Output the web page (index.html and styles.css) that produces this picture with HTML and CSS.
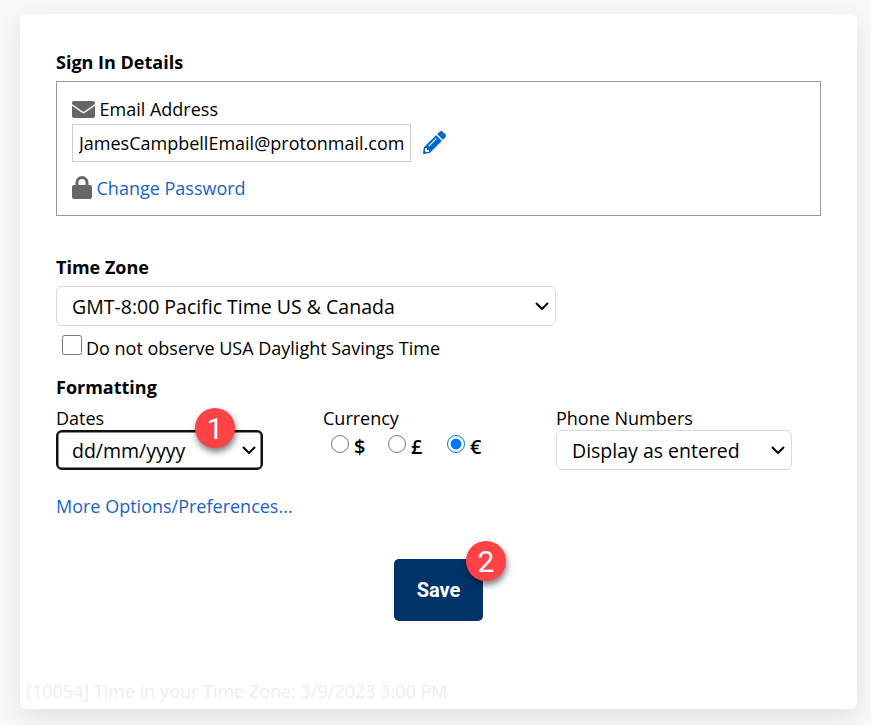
FILE: index.html
```
<!DOCTYPE html>
<html lang="en">
<head>
    <meta charset="UTF-8">
    <meta name="viewport" content="width=device-width, initial-scale=1.0">
    <title>Settings</title>
    <link rel="stylesheet" href="styles.css">
</head>
<body>
    <form class="card">
        <h2>Sign In Details</h2>
        <div class="signin">
            <label class="icon-row" for="email">
                <svg class="icon-mail" viewBox="0 0 23 17"><path fill="#666" d="M2 0h19a2 2 0 0 1 2 2v1l-10.300 7.200a2 2 0 0 1-2.400 0L0 3V2a2 2 0 0 1 2-2zM0 4.700l9.700 6.800a3 3 0 0 0 3.600 0L23 4.700V15a2 2 0 0 1-2 2H2a2 2 0 0 1-2-2z"/></svg>
                <span>Email Address</span>
            </label>
            <div class="email-row">
                <input type="text" id="email" class="email" value="JamesCampbellEmail@protonmail.com">
                <svg class="icon-pencil" viewBox="0 0 512 512"><path fill="#0066cc" d="M497.900 142.100l-46.100 46.100c-4.700 4.700-12.300 4.700-17 0l-111-111c-4.700-4.700-4.700-12.300 0-17l46.100-46.100c18.700-18.700 49.100-18.700 67.900 0l60.100 60.100c18.800 18.700 18.800 49.100 0 68zM284.200 99.800L21.600 362.400.4 483.900c-2.900 16.400 11.400 30.600 27.800 27.800l121.500-21.300 262.600-262.600c4.700-4.700 4.700-12.300 0-17l-111-111c-4.800-4.700-12.400-4.700-17.100 0zM124.100 339.900c-5.500-5.500-5.500-14.300 0-19.800l154-154c5.500-5.500 14.300-5.500 19.800 0s5.500 14.300 0 19.800l-154 154c-5.500 5.500-14.300 5.500-19.800 0zM88 424h48v36.300l-64.500 11.300-31.100-31.100L51.700 376H88v48z"/></svg>
            </div>
            <div class="icon-row password-row">
                <svg class="icon-lock" viewBox="0 0 20 23"><path fill="#666" d="M18 9h-1.500V6.500a6.500 6.500 0 0 0-13 0V9H2a2 2 0 0 0-2 2v10a2 2 0 0 0 2 2h16a2 2 0 0 0 2-2V11a2 2 0 0 0-2-2zM13.500 9h-7V6.500a3.500 3.500 0 0 1 7 0z"/></svg>
                <a href="#">Change Password</a>
            </div>
        </div>

        <h2>Time Zone</h2>
        <div class="select zone">
            <select>
                <option>GMT-8:00 Pacific Time US &amp; Canada</option>
            </select>
            <svg class="chevron" viewBox="0 0 14 8"><path d="M1 1l6 6 6-6"/></svg>
        </div>
        <label class="check-row">
            <input type="checkbox" class="checkbox">
            <span>Do not observe USA Daylight Savings Time</span>
        </label>

        <h2 class="formatting">Formatting</h2>
        <div class="columns">
            <div>
                <div class="label">Dates</div>
                <div class="select dates">
                    <select>
                        <option>dd/mm/yyyy</option>
                    </select>
                    <svg class="chevron" viewBox="0 0 14 8"><path d="M1 1l6 6 6-6"/></svg>
                    <span class="step step-one">1</span>
                </div>
            </div>
            <div>
                <div class="label">Currency</div>
                <div class="radios">
                    <label><input type="radio" name="currency"><b>$</b></label>
                    <label><input type="radio" name="currency"><b>£</b></label>
                    <label><input type="radio" name="currency" checked><b>€</b></label>
                </div>
            </div>
            <div>
                <div class="label">Phone Numbers</div>
                <div class="select">
                    <select>
                        <option>Display as entered</option>
                    </select>
                    <svg class="chevron" viewBox="0 0 14 8"><path d="M1 1l6 6 6-6"/></svg>
                </div>
            </div>
        </div>
        <a href="#" class="more">More Options/Preferences...</a>

        <div class="save-wrap">
            <button type="button" class="save">Save</button>
            <span class="step step-two">2</span>
        </div>

        <p class="time-note">[10054] Time in your Time Zone: 3/9/2023 3:00 PM</p>
    </form>
</body>
</html>
```
FILE: styles.css
```
* {
    box-sizing: border-box;
}
body {
    margin: 0;
    height: 725px;
    padding: 14px 14px 0 20px;
    overflow: hidden;
    background-color: #f9f9f9;
    font-family: "Open Sans", sans-serif;
    font-size: 18px;
    line-height: 24px;
    color: black;
}
.card {
    display: flex;
    flex-direction: column;
    height: 695px;
    padding: 36px 36px 0;
    background-color: white;
    border-radius: 6px;
    box-shadow: 0 8px 24px rgba(30, 50, 50, 0.12);
}
h2 {
    margin: 0;
    font-size: 18px;
    font-weight: 700;
    line-height: 24px;
}
a {
    color: #1a62c6;
    text-decoration: none;
}
svg {
    flex: none;
}
.signin {
    height: 135px;
    margin: 7px 0 39px;
    padding: 15px;
    border: 1px solid #999;
}
.icon-row {
    display: flex;
    align-items: center;
    gap: 4.5px;
}
.icon-mail {
    width: 23px;
    height: 17px;
}
.icon-lock {
    width: 20px;
    height: 23px;
    margin-top: -1px;
}
.icon-pencil {
    width: 23px;
    height: 23px;
    margin-top: -2px;
}
.email-row {
    display: flex;
    align-items: center;
    gap: 11.5px;
    margin-top: 3px;
}
.email {
    width: 339px;
    height: 38px;
    padding: 0 6px;
    border: 1px solid #ccc;
    font: inherit;
}
.password-row {
    margin-top: 14px;
}
.select {
    position: relative;
    height: 40px;
}
.select select {
    width: 100%;
    height: 40px;
    padding: 0 15px;
    border: 1px solid #d9d9d9;
    border-radius: 6px;
    appearance: none;
    background-color: white;
    color: black;
    font-family: inherit;
    font-size: 19.5px;
}
.chevron {
    position: absolute;
    right: 7px;
    top: 16px;
    width: 14px;
    height: 8px;
    fill: none;
    stroke: black;
    stroke-width: 2;
    pointer-events: none;
}
.zone {
    width: 500px;
    margin-top: 7px;
}
.check-row {
    display: flex;
    gap: 5px;
    margin: 10px 0 0 6px;
}
.checkbox {
    width: 20px;
    height: 20px;
    margin: -1px 0 0;
}
.check-row span {
    margin-left: -1px;
}
.formatting {
    margin-top: 15px;
}
.columns {
    display: grid;
    grid-template-columns: 207px 173px 236px;
    column-gap: 60px;
    margin-top: 7px;
}
.dates select {
    padding: 0 14px;
    border: 2px solid #101010;
    box-shadow: inset 0 0 0 0.5px #101010;
}
.radios {
    display: flex;
    gap: 22px;
    padding: 3px 0 0 8px;
}
.radios label {
    display: flex;
    gap: 5px;
}
.radios input {
    width: 18px;
    height: 18px;
    margin: 2px 0 0;
    accent-color: #0075ff;
}
.radios b {
    width: 12px;
    font-size: 20px;
    font-weight: 600;
    line-height: 28px;
}
.radios label:last-child {
    margin-left: 2px;
}
.label {
    height: 24px;
}
.more {
    margin-top: 24px;
}
.save-wrap {
    position: relative;
    width: 89px;
    margin: 41px 0 0 338px;
}
.save {
    width: 89px;
    height: 62px;
    border: none;
    border-radius: 5px;
    background-color: #003468;
    color: white;
    font: bold 20px Roboto, sans-serif;
}
.step {
    position: absolute;
    width: 40px;
    height: 40px;
    border-radius: 50%;
    background-color: #ff4245;
    box-shadow: 1px 4px 6px rgba(0, 0, 0, 0.5);
    color: white;
    font: 30px/41px Roboto, sans-serif;
    text-align: center;
}
.step-one {
    left: 139px;
    top: -22px;
}
.step-two {
    left: 72px;
    top: -18px;
}
.time-note {
    margin: auto 0 6px -30px;
    color: #eee;
}
```
